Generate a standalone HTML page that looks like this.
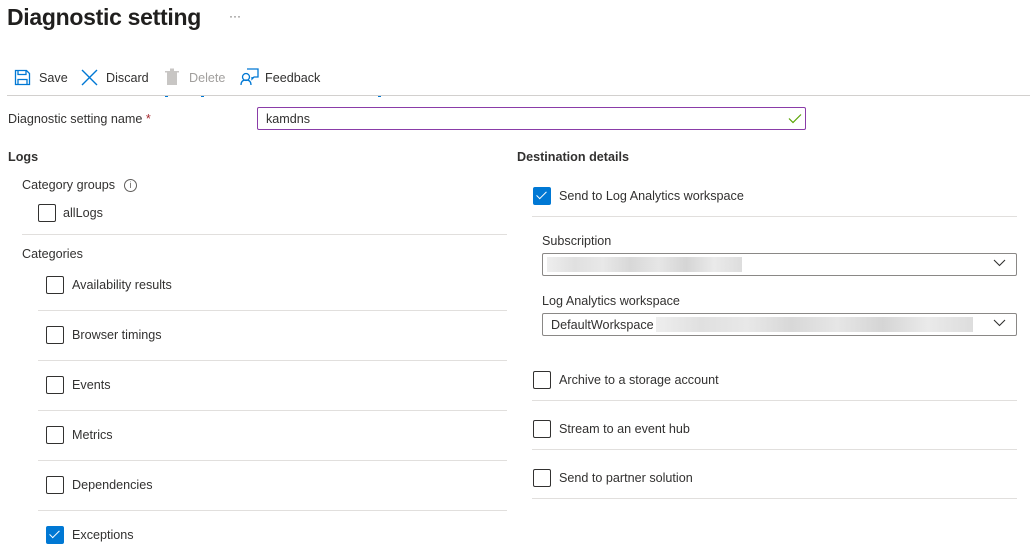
<!DOCTYPE html>
<html><head><style>
body{margin:0;width:1030px;height:555px;background:#fff;font-family:"Liberation Sans",sans-serif;color:#323130;font-size:12.6px;position:relative;overflow:hidden}
.a{position:absolute;white-space:nowrap}
.cb{position:absolute;width:16px;height:16px;border:1px solid #323130;border-radius:2px;background:#fff}
.cb.on{background:#0078d4;border-color:#0078d4}
.cb.on:after{content:"";position:absolute;left:5px;top:1px;width:4px;height:9px;border:solid #fff;border-width:0 1.3px 1.3px 0;transform:rotate(45deg)}
.hl{position:absolute;height:1px;background:#e1dfdd}
.dd{position:absolute;border:1px solid #8a8886;border-radius:2px;height:21px;background:#fff}
.chev{position:absolute;right:10px;top:5px}
.blur{position:absolute;top:3px;height:15px;background:linear-gradient(90deg,#eee,#e0e0e0,#e8e8e8,#d8d8d8,#e6e6e6,#d5d5d5,#eaeaea,#ddd)}
</style></head><body>
<div class="a" style="left:7px;top:4px;font-size:23px;font-weight:bold;color:#201f1e;letter-spacing:-0.3px">Diagnostic setting</div>
<div class="a" style="left:229px;top:9px;font-size:12px;color:#605e5c">···</div>

<svg class="a" style="left:14px;top:69px" width="17" height="17" viewBox="0 0 17 17"><path d="M1.5 1.5h11l3 3v11h-14z" fill="none" stroke="#0078d4" stroke-width="1.3"/><path d="M4 1.5v4h8v-4M4 15.5v-5h9v5" fill="none" stroke="#0078d4" stroke-width="1.3"/></svg>
<div class="a" style="left:39px;top:71px">Save</div>
<svg class="a" style="left:81px;top:69px" width="17" height="17"><path d="M1 1L16 16M16 1L1 16" stroke="#0078d4" stroke-width="1.4"/></svg>
<div class="a" style="left:106px;top:71px">Discard</div>
<svg class="a" style="left:165px;top:68px" width="14" height="18"><rect x="2" y="4" width="10" height="13" fill="#c8c6c4"/><rect x="0" y="3" width="14" height="1.5" fill="#c8c6c4"/><rect x="5" y="0.5" width="4" height="2.5" fill="#c8c6c4"/></svg>
<div class="a" style="left:189px;top:71px;color:#a19f9d">Delete</div>
<svg class="a" style="left:240px;top:68px" width="19" height="18"><circle cx="6" cy="9" r="3.5" fill="none" stroke="#0078d4" stroke-width="1.3"/><path d="M1 17c0-4 2.5-5 5-5s5 1 5 5M7 1h11v8h-4l-2 2v-2" fill="none" stroke="#0078d4" stroke-width="1.3"/></svg>
<div class="a" style="left:265px;top:71px">Feedback</div>
<div class="hl" style="left:7px;top:95px;width:1023px;background:#d2d0ce"></div>
<div class="a" style="left:165px;top:96px;width:3px;height:1px;background:#0078d4"></div>
<div class="a" style="left:201px;top:96px;width:3px;height:1px;background:#0078d4"></div>
<div class="a" style="left:378px;top:96px;width:3px;height:1px;background:#0078d4"></div>

<div class="a" style="left:8px;top:112px">Diagnostic setting name <span style="color:#a4262c">*</span></div>
<div class="a" style="left:257px;top:107px;width:547px;height:21px;border:1px solid #8a3ca8;border-radius:2px"></div>
<div class="a" style="left:266px;top:112px">kamdns</div>
<svg class="a" style="left:788px;top:113px" width="14" height="11"><path d="M1 5.5l4 4 8-8" fill="none" stroke="#57a300" stroke-width="1.2"/></svg>

<div class="a" style="left:8px;top:150px;font-weight:bold">Logs</div>
<div class="a" style="left:22px;top:178px">Category groups</div>
<div class="a" style="left:124px;top:179px;width:11px;height:11px;border:1px solid #605e5c;border-radius:50%;font-size:9px;text-align:center;line-height:11px;color:#605e5c">i</div>
<div class="cb" style="left:38px;top:204px"></div>
<div class="a" style="left:63px;top:206px">allLogs</div>
<div class="hl" style="left:22px;top:234px;width:485px"></div>
<div class="a" style="left:22px;top:247px">Categories</div>

<div class="cb" style="left:46px;top:276px"></div><div class="a" style="left:72px;top:278px">Availability results</div>
<div class="hl" style="left:38px;top:310px;width:469px"></div>
<div class="cb" style="left:46px;top:326px"></div><div class="a" style="left:72px;top:328px">Browser timings</div>
<div class="hl" style="left:38px;top:360px;width:469px"></div>
<div class="cb" style="left:46px;top:376px"></div><div class="a" style="left:72px;top:378px">Events</div>
<div class="hl" style="left:38px;top:410px;width:469px"></div>
<div class="cb" style="left:46px;top:426px"></div><div class="a" style="left:72px;top:428px">Metrics</div>
<div class="hl" style="left:38px;top:460px;width:469px"></div>
<div class="cb" style="left:46px;top:476px"></div><div class="a" style="left:72px;top:478px">Dependencies</div>
<div class="hl" style="left:38px;top:510px;width:469px"></div>
<div class="cb on" style="left:46px;top:526px"></div><div class="a" style="left:72px;top:528px">Exceptions</div>

<div class="a" style="left:517px;top:150px;font-weight:bold">Destination details</div>
<div class="cb on" style="left:533px;top:187px"></div>
<div class="a" style="left:559px;top:189px">Send to Log Analytics workspace</div>
<div class="hl" style="left:532px;top:216px;width:485px"></div>
<div class="a" style="left:542px;top:234px">Subscription</div>
<div class="dd" style="left:542px;top:253px;width:473px"><div class="blur" style="left:4px;width:195px"></div>
<svg class="chev" width="13" height="8"><path d="M1 1l5.5 5.5L12 1" fill="none" stroke="#323130" stroke-width="1.1"/></svg></div>
<div class="a" style="left:542px;top:294px">Log Analytics workspace</div>
<div class="dd" style="left:542px;top:313px;width:473px"><div class="a" style="left:8px;top:4px">DefaultWorkspace</div><div class="blur" style="left:113px;width:317px"></div>
<svg class="chev" width="13" height="8"><path d="M1 1l5.5 5.5L12 1" fill="none" stroke="#323130" stroke-width="1.1"/></svg></div>

<div class="cb" style="left:533px;top:371px"></div><div class="a" style="left:559px;top:373px">Archive to a storage account</div>
<div class="hl" style="left:532px;top:400px;width:485px"></div>
<div class="cb" style="left:533px;top:420px"></div><div class="a" style="left:559px;top:422px">Stream to an event hub</div>
<div class="hl" style="left:532px;top:449px;width:485px"></div>
<div class="cb" style="left:533px;top:469px"></div><div class="a" style="left:559px;top:471px">Send to partner solution</div>
<div class="hl" style="left:532px;top:498px;width:485px"></div>
</body></html>
